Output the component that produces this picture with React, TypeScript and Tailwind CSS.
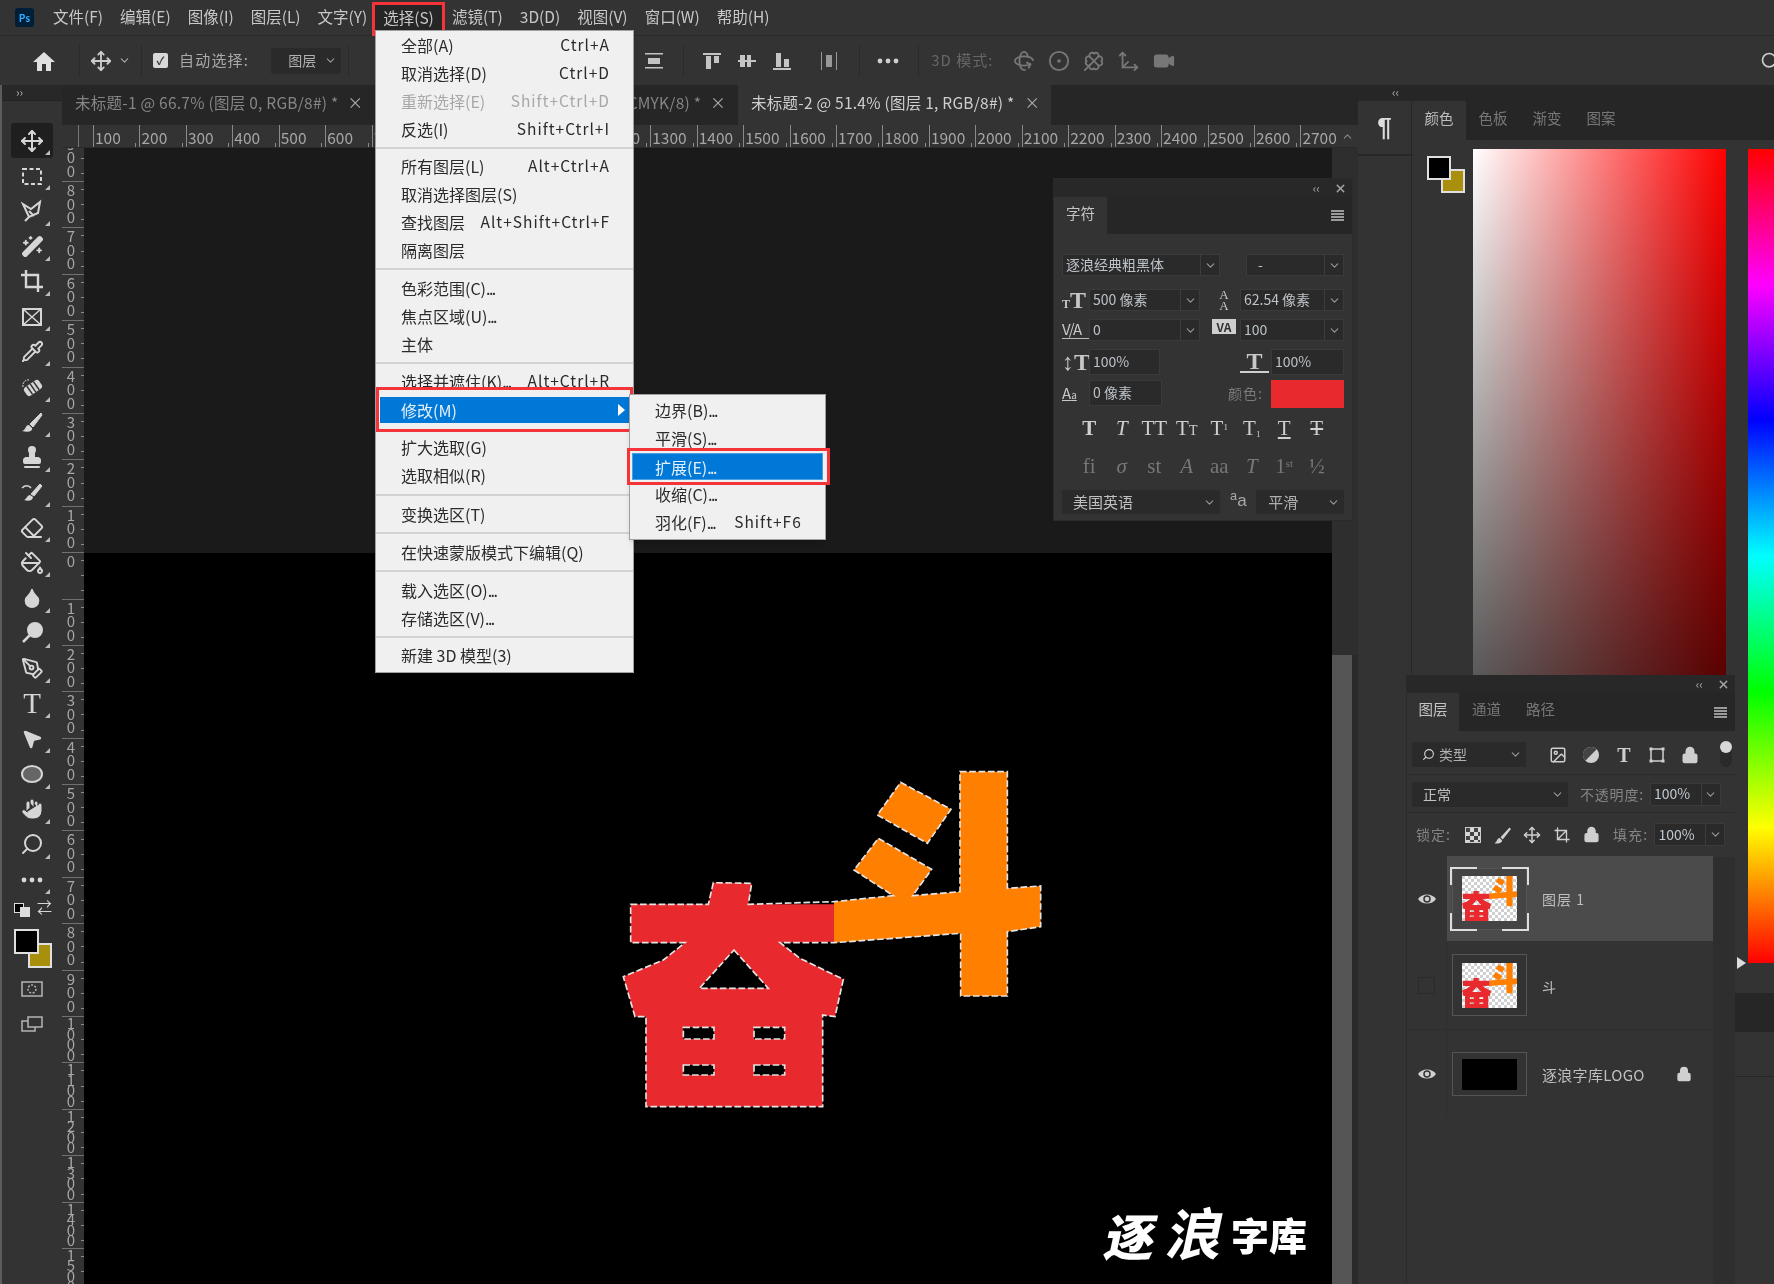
import {
  ChevronDown, ChevronUp, Clover, Crop, Droplet, Eraser, Hand, Lock, Move, Move3d,
  MousePointer2, PaintBucket, PenTool, Pipette, Rotate3d, CircleDot, Search, Stamp, Video, WandSparkles, Image,
  X,
} from "lucide-react";
import type { ReactNode } from "react";

const menuBar = ["文件(F)", "编辑(E)", "图像(I)", "图层(L)", "文字(Y)", "选择(S)", "滤镜(T)", "3D(D)", "视图(V)", "窗口(W)", "帮助(H)"];

type MenuItem = { label?: string; key?: string; dim?: boolean; sep?: string; spacer?: boolean };

const selectMenu: MenuItem[] = [
  { label: "全部(A)", key: "Ctrl+A" },
  { label: "取消选择(D)", key: "Ctrl+D" },
  { label: "重新选择(E)", key: "Shift+Ctrl+D", dim: true },
  { label: "反选(I)", key: "Shift+Ctrl+I" },
  { sep: "h-[9px]" },
  { label: "所有图层(L)", key: "Alt+Ctrl+A" },
  { label: "取消选择图层(S)" },
  { label: "查找图层", key: "Alt+Shift+Ctrl+F" },
  { label: "隔离图层" },
  { sep: "h-[10px]" },
  { label: "色彩范围(C)..." },
  { label: "焦点区域(U)..." },
  { label: "主体" },
  { sep: "h-[9px]" },
  { label: "选择并遮住(K)...", key: "Alt+Ctrl+R" },
  { spacer: true },
  { label: "扩大选取(G)" },
  { label: "选取相似(R)" },
  { sep: "h-[11px]" },
  { label: "变换选区(T)" },
  { sep: "h-[10px]" },
  { label: "在快速蒙版模式下编辑(Q)" },
  { sep: "h-[10px]" },
  { label: "载入选区(O)..." },
  { label: "存储选区(V)..." },
  { sep: "h-[9px]" },
  { label: "新建 3D 模型(3)" },
];

const rulerTop = Array.from({ length: 27 }, (_, i) => (i + 1) * 100);
const rulerLeft = [900, 800, 700, 600, 500, 400, 300, 200, 100, 0, 100, 200, 300, 400, 500, 600, 700, 800, 900, 1000, 1100, 1200, 1300, 1400, 1500];

const redPath = "M92 463H325L340 398L455 400L445 463H702V575L540 578L600 625L730 688L705 800L668 795V1070H138V800H105L70 680L190 630L255 578H92Z";
const holes = "M402 600L505 715H298ZM250 832H342V867H250ZM462 832H554V867H462ZM250 945H342V975H250ZM462 945H554V975H462Z";
const orangePath = "M702 455L880 437L762 360L835 265L995 358L938 437L1080 425V65H1222V415L1322 408V530L1222 545V738H1082V550L702 578Z";
const orangeTop = "M902 97L1053 178L982 280L832 195Z";
const outline = "M92 463H325L340 398L455 400L445 463L702 455L880 437L762 360L835 265L995 358L938 437L1080 425V65H1222V415L1322 408V530L1222 545V738H1082V550L702 578L540 578L600 625L730 688L705 800L668 795V1070H138V800H105L70 680L190 630L255 578H92Z";

function Artwork({ className, viewBox, ants }: { className: string; viewBox: string; ants?: boolean }) {
  return (
    <svg viewBox={viewBox} preserveAspectRatio="none" className={className}>
      <path d={redPath + holes} fill="#e8292d" fillRule="evenodd" />
      <path d={orangePath} fill="#ff8000" />
      <path d={orangeTop} fill="#ff8000" />
      {ants && <path d={outline + holes + orangeTop} fill="none" strokeWidth="5" stroke="#e4e4e4" strokeDasharray="20 8" />}
    </svg>
  );
}

function Svg({ children, size = 24 }: { children: ReactNode; size?: number }) {
  return (
    <svg width={size} height={size} viewBox="0 0 24 24" fill="none" stroke="currentColor" strokeWidth="2">
      {children}
    </svg>
  );
}

function Dots() {
  return (
    <svg width="22" height="6" viewBox="0 0 22 6" fill="currentColor">
      <circle cx="3" cy="3" r="2.4" />
      <circle cx="11" cy="3" r="2.4" />
      <circle cx="19" cy="3" r="2.4" />
    </svg>
  );
}

const tools: { icon: ReactNode; active?: boolean }[] = [
  { icon: <Move size={24} />, active: true },
  { icon: <Svg><rect x="3" y="5" width="18" height="15" strokeDasharray="4 2.5" /></Svg> },
  { icon: <Svg><path d="M3 5L11 10L20 3L18 14L9 18ZM9 18L5 22M9 12L14 17" /></Svg> },
  { icon: <WandSparkles size={23} fill="#d6d6d6" /> },
  { icon: <Svg><path d="M6 1V18H23M1 6H18V23" strokeWidth="2.4" /></Svg> },
  { icon: <Svg><rect x="3" y="4" width="18" height="16" /><path d="M3 4L21 20M21 4L3 20" strokeWidth="1.5" /></Svg> },
  { icon: <Pipette size={23} /> },
  {
    icon: (
      <Svg>
        <g transform="rotate(-35 13 13)">
          <rect x="4" y="8" width="18" height="10" rx="3" fill="currentColor" strokeWidth="0" />
          <path d="M9 8V18M13 8V18M17 8V18" stroke="#333" strokeWidth="1.5" />
        </g>
        <path d="M3 12C2 7 6 4 10 5" strokeWidth="1" strokeDasharray="2 1" />
      </Svg>
    ),
  },
  { icon: <Svg><path d="M21 3L10 14L13 17L22 5Z" fill="currentColor" strokeWidth="1" /><path d="M9 15C5 15 6 20 2 21C8 23 13 21 12 18Z" fill="currentColor" strokeWidth="0" /></Svg> },
  { icon: <Stamp size={24} fill="#d6d6d6" /> },
  { icon: <Svg><path d="M20 4L11 14L14 16L22 6Z" fill="currentColor" strokeWidth="1" /><path d="M10 15C7 15 7 19 4 20C9 22 13 20 13 17Z" fill="currentColor" strokeWidth="0" /><path d="M2 8C5 5 9 5 11 8" strokeWidth="1.5" /></Svg> },
  { icon: <Eraser size={24} /> },
  { icon: <PaintBucket size={24} /> },
  { icon: <Droplet size={22} fill="#d6d6d6" /> },
  { icon: <Svg><circle cx="15" cy="9" r="7" fill="currentColor" /><path d="M10 14L3 21" strokeWidth="2.5" /></Svg> },
  { icon: <PenTool size={23} /> },
  { icon: <span className="font-['Liberation_Serif',serif] text-[29px] leading-none">T</span> },
  { icon: <MousePointer2 size={22} fill="#d6d6d6" /> },
  { icon: <Svg><ellipse cx="12" cy="12" rx="10" ry="8" fill="#666" /></Svg> },
  { icon: <Hand size={24} fill="#d6d6d6" stroke="#333" strokeWidth={1} /> },
  { icon: <Search size={24} className="-scale-y-100 rotate-180" /> },
  { icon: <Dots /> },
];

// the ellipsis after a menu label sits tight in the reference
function Label({ text }: { text: string }) {
  if (!text.endsWith("...")) return <span>{text}</span>;
  return (
    <span>
      {text.slice(0, -3)}
      <span className="tracking-[-1.6px]">...</span>
    </span>
  );
}

function Field({ children, className, arrow }: { children?: ReactNode; className: string; arrow?: boolean }) {
  return (
    <div className={`flex items-center bg-[#2a2a2a] border border-[#3a3a3a] text-[#bcc2c8] text-[14px] ${className}`}>
      <span className="flex-1 pl-[3px] pb-[1px] whitespace-nowrap overflow-hidden">{children}</span>
      {arrow && (
        <span className="w-[19px] h-full flex items-center justify-center border-l border-[#3d3d3d]">
          <ChevronDown size={13} className="text-[#999]" />
        </span>
      )}
    </div>
  );
}

function Select({ children, className }: { children: ReactNode; className: string }) {
  return (
    <div className={`flex items-center justify-between bg-[#2a2a2a] rounded-[2px] text-[#b0b0b0] pr-[4px] ${className}`}>
      {children}
      <ChevronDown size={13} className="text-[#999]" />
    </div>
  );
}

function Grip() {
  return (
    <div className="flex flex-col gap-[1px] w-[13px]">
      <span className="h-[2px] bg-[#9a9a9a]" />
      <span className="h-[2px] bg-[#9a9a9a]" />
      <span className="h-[2px] bg-[#9a9a9a]" />
      <span className="h-[2px] bg-[#9a9a9a]" />
    </div>
  );
}

function PanelHead({ collapse }: { collapse: string }) {
  return (
    <div className="h-[18px] bg-[#282828] flex items-center justify-end text-[#aaa]">
      <span className={`text-[12px] leading-none ${collapse}`}>‹‹</span>
      <X size={13} strokeWidth={2.5} className="mr-[5px]" />
    </div>
  );
}

function Serif({ children, dim, className = "" }: { children: ReactNode; dim?: boolean; className?: string }) {
  return (
    <span className={`w-[32.5px] text-center font-['Liberation_Serif',serif] text-[21px] leading-none whitespace-nowrap ${dim ? "text-[#777]" : "text-[#cfcfcf]"} ${className}`}>
      {children}
    </span>
  );
}

function Eye() {
  return (
    <svg width="18" height="12" viewBox="0 0 24 16">
      <path d="M0 8C5 0 19 0 24 8C19 16 5 16 0 8Z" fill="#d0d0d0" />
      <circle cx="12" cy="8" r="5" fill="#333" />
      <circle cx="12" cy="8" r="3" fill="#d0d0d0" />
    </svg>
  );
}

function CheckerThumb() {
  return (
    <div className="w-[55px] h-[45px] bg-[repeating-conic-gradient(#ffffff_0_25%,#cfcfcf_0_50%)] bg-size-[6px_6px]">
      <Artwork viewBox="70 65 1252 1005" className="w-full h-full" />
    </div>
  );
}

function AlignIcon({ d }: { d: string }) {
  return (
    <svg width="22" height="22" viewBox="0 0 22 22" fill="#c4c4c4">
      <path d={d} />
    </svg>
  );
}

export default function App() {
  return (
    <div className="relative w-[1774px] h-[1284px] overflow-hidden bg-[#333333] flex flex-col font-['Noto_Sans_CJK_SC','Noto_Sans',sans-serif] text-[#c8c8c8] blur-[0.5px]">
      {/* menu bar */}
      <div className="h-[36px] shrink-0 flex items-center border-b border-[#2a2a2a] text-[15.5px] leading-none">
        <div className="ml-[15px] mr-[19px] w-[19px] h-[19px] rounded-[3px] bg-[#001e36] text-[#31a8ff] text-[10px] font-bold flex items-center justify-center">Ps</div>
        <div className="flex gap-[17px] pb-[2px]">
          {menuBar.map((m) => (
            <span key={m} className="whitespace-nowrap">{m}</span>
          ))}
        </div>
      </div>

      {/* options bar */}
      <div className="h-[49px] shrink-0 flex items-center text-[#aaa]">
        <div className="w-[32px]" />
        <svg width="24" height="24" viewBox="0 0 24 24" fill="#e0e0e0"><path d="M12 3L1 13H5V22H10V15H14V22H19V13H23Z" /></svg>
        <span className="w-px h-[32px] bg-[#2a2a2a] ml-[23px]" />
        <Move size={22} className="ml-[10px] text-[#ccc]" />
        <ChevronDown size={13} className="ml-[6px]" />
        <span className="w-px h-[32px] bg-[#2a2a2a] ml-[10px]" />
        <span className="ml-[11px] w-[15px] h-[15px] rounded-[2px] bg-[#d8d8d8] text-[#333] text-[11px] font-bold leading-[15px] text-center">✓</span>
        <span className="ml-[11px] text-[15px] tracking-[1.2px] whitespace-nowrap">自动选择:</span>
        <Select className="ml-[22px] w-[70px] h-[26px] pl-[17px] text-[14px]">图层</Select>
        <span className="w-px h-[32px] bg-[#2a2a2a] ml-[7px]" />
        <div className="ml-[294px] flex items-center">
          <AlignIcon d="M2 3H20V4.5H2ZM5 8H17V14H5ZM2 17H20V18.5H2Z" />
          <span className="w-px h-[32px] bg-[#2a2a2a] ml-[18px]" />
          <div className="ml-[17px] flex gap-[13px] items-center">
            <AlignIcon d="M2 3H20V5H2ZM5 6H10V19H5ZM13 6H18V13H13Z" />
            <AlignIcon d="M4 5H9V10H11V5H15V10H20V12H15V17H11V12H9V17H4V12H2V10H4Z" />
            <AlignIcon d="M2 18H20V20H2ZM5 3H10V17H5ZM13 9H18V17H13Z" />
          </div>
          <div className="ml-[25px] opacity-70"><AlignIcon d="M3 2H4V20H3ZM18 2H19V20H18ZM8 5H14V17H8Z" /></div>
          <span className="w-px h-[32px] bg-[#2a2a2a] ml-[19px]" />
          <span className="ml-[17px] text-[#d0d0d0]"><Dots /></span>
          <span className="w-px h-[32px] bg-[#2a2a2a] ml-[19px]" />
          <span className="ml-[12px] text-[15px] text-[#666] tracking-[1px] whitespace-nowrap">3D 模式:</span>
          <div className="ml-[20px] flex gap-[13px] text-[#777]">
            <Rotate3d size={22} />
            <CircleDot size={22} />
            <Clover size={22} />
            <Move3d size={22} />
            <Video size={22} fill="#777" />
          </div>
        </div>
        <Search size={20} className="ml-auto mr-[-6px] text-[#ccc]" />
      </div>

      <div className="flex-1 min-h-0 flex">
        {/* tool column */}
        <div className="w-[62px] shrink-0 flex flex-col border-l-2 border-[#5c5c5c] bg-[#333333]">
          <div className="h-[16px] bg-[#282828] text-[#aaa] text-[12px] leading-[14px] pl-[14px] border-b border-[#222]">››</div>
          <div className="h-[22px]" />
          <div className="flex flex-col items-center text-[#d6d6d6]">
            {tools.map((t, i) => (
              <div key={i} className={`relative w-[42px] h-[35.2px] flex items-center justify-center ${t.active ? "bg-[#1f1f1f] rounded-[3px]" : ""}`}>
                {t.icon}
                <span className="absolute right-[3px] bottom-[3px] w-0 h-0 border-l-[5px] border-l-transparent border-b-[5px] border-b-[#bdbdbd]" />
              </div>
            ))}
          </div>
          <div className="relative h-[34px] mt-[6px] text-[#d6d6d6]">
            <span className="absolute left-[12px] top-[0px] w-[10px] h-[10px] bg-black border border-[#ddd]" />
            <span className="absolute left-[18px] top-[4px] w-[10px] h-[10px] bg-[#ddd]" />
            <span className="absolute left-[35px] top-[-4px] text-[15px] leading-none">⇄</span>
          </div>
          <div className="relative h-[46px] -mt-[8px]">
            <span className="absolute left-[26px] top-[14px] w-[24px] h-[25px] bg-[#a8900c] border-2 border-[#e0e0e0]" />
            <span className="absolute left-[12px] top-0 w-[25px] h-[25px] bg-black border-2 border-[#e0e0e0]" />
          </div>
          <div className="flex flex-col items-center gap-[11px] mt-[2px] text-[#b5b5b5]">
            <Svg><rect x="2" y="5" width="20" height="14" strokeWidth="1.5" /><circle cx="12" cy="12" r="4" strokeDasharray="2 1.5" strokeWidth="1.5" /></Svg>
            <Svg><rect x="2" y="9" width="13" height="10" strokeWidth="1.5" /><rect x="8" y="5" width="14" height="10" fill="#333" strokeWidth="1.5" /></Svg>
          </div>
        </div>

        {/* document area */}
        <div className="flex-1 min-w-0 flex flex-col">
          <div className="h-[40px] shrink-0 bg-[#262626] flex text-[15.5px] tracking-[0.25px] text-[#858585]">
            <div className="w-[310px] flex items-center pl-[13px] pb-[4px] whitespace-nowrap">
              未标题-1 @ 66.7% (图层 0, RGB/8#) *<span className="ml-[9px] text-[#aaa]">×</span>
            </div>
            <div className="w-[365px] flex items-center justify-end pr-[11px] pb-[4px] whitespace-nowrap">
              未标题-3 @ 100% (CMYK/8) *<span className="ml-[9px] text-[#aaa]">×</span>
            </div>
            <div className="w-[313px] ml-px flex items-center pl-[13px] pb-[4px] bg-[#333333] text-[#cfcfcf] whitespace-nowrap">
              未标题-2 @ 51.4% (图层 1, RGB/8#) *<span className="ml-[10px] text-[#aaa]">×</span>
            </div>
          </div>
          <div className="h-[23px] shrink-0 flex bg-[#333333] border-b border-[#2a2a2a]">
            <div className="w-[31px] shrink-0 flex justify-start pl-[16px]"><span className="w-px h-full bg-[#777]" /></div>
            <div className="flex-1 min-w-0 flex overflow-hidden">
              {rulerTop.map((n) => (
                <div key={n} className="w-[46.45px] shrink-0 flex border-l border-[#8a8a8a] pl-[1px] pt-[2px] text-[15.5px] leading-[20px] text-[#a6a6a6]">
                  {n}
                  <span className="self-end w-px h-[4px] bg-[#8a8a8a] ml-auto mr-[3px]" />
                </div>
              ))}
            </div>
            <div className="w-[22px] shrink-0 flex items-center justify-center"><ChevronUp size={13} className="text-[#888]" /></div>
          </div>
          <div className="flex-1 min-h-0 flex">
            <div className="w-[22px] shrink-0 overflow-hidden bg-[#333333]">
              <div className="-mt-[12.4px]">
                {rulerLeft.map((n, i) => (
                  <div key={i} className="h-[46.4px] flex border-b border-[#707070] pl-[4px]">
                    <div className={`w-[10px] pt-[1px] text-[15px] text-center text-[#a6a6a6] ${n >= 1000 ? "leading-[10.5px]" : "leading-[13.5px]"}`}>
                      {String(n).split("").map((d, j) => (
                        <div key={j}>{d}</div>
                      ))}
                    </div>
                    <div className="ml-auto flex flex-col justify-around w-[3px]">
                      <span className="h-px bg-[#8a8a8a]" />
                      <span className="h-px bg-[#8a8a8a]" />
                      <span className="h-px bg-[#8a8a8a]" />
                    </div>
                  </div>
                ))}
              </div>
            </div>
            <div className="flex-1 min-w-0 flex flex-col">
              <div className="h-[405px] shrink-0 bg-[#1a1a1a]" />
              <div className="relative flex-1 bg-black">
                <Artwork ants viewBox="0 0 1380 1140" className="absolute left-[516px] top-[197px] w-[460px] h-[380px]" />
                <div className="absolute left-[1023px] top-[650px] flex items-end text-white whitespace-nowrap font-black leading-none">
                  <span className="text-[50px] -skew-x-12">逐</span>
                  <span className="ml-[12px] text-[56px] font-bold -skew-x-12">浪</span>
                  <span className="text-[38px] ml-[6px] mb-[6px]">字库</span>
                </div>
              </div>
            </div>
            <div className="w-[26px] shrink-0 flex flex-col">
              <div className="h-[507px] bg-[#2e2e2e]" />
              <div className="flex-1 flex">
                <div className="w-[20px] bg-[#555555]" />
                <div className="flex-1 bg-[#2a2a2a]" />
              </div>
            </div>
          </div>
        </div>

        {/* docked panels */}
        <div className="w-[416px] shrink-0 flex flex-col">
          <div className="h-[16px] shrink-0 bg-[#262626] text-[#aaa] text-[12px] leading-[14px] pl-[34px]">‹‹</div>
          <div className="flex-1 min-h-0 flex">
            <div className="w-[54px] shrink-0 border-r border-[#262626]">
              <div className="h-[55px] flex items-center justify-center border-b-2 border-[#262626] text-[#ddd] font-['Liberation_Sans',sans-serif] text-[26px] font-bold">¶</div>
            </div>
            <div className="flex-1 min-w-0 flex flex-col">
              <div className="h-[39px] shrink-0 flex bg-[#262626] text-[14.5px] text-[#777]">
                <span className="w-[54px] bg-[#333333] text-[#bdbdbd] leading-[33px] text-center">颜色</span>
                <span className="w-[54px] leading-[33px] text-center">色板</span>
                <span className="w-[54px] leading-[33px] text-center">渐变</span>
                <span className="w-[54px] leading-[33px] text-center">图案</span>
              </div>
              <div className="h-[823px] shrink-0 flex pt-[9px]">
                <div className="relative w-[61px] shrink-0">
                  <span className="absolute left-[29px] top-[20px] w-[24px] h-[24px] bg-[#a8900c] border-2 border-[#e0e0e0]" />
                  <span className="absolute left-[15px] top-[7px] w-[24px] h-[24px] bg-black border-2 border-[#e0e0e0]" />
                </div>
                <div className="w-[253px] h-[814px] bg-[linear-gradient(to_bottom,transparent,#000),linear-gradient(to_right,#fff,#f00)]" />
                <div className="relative ml-[22px] flex-1 h-[814px] bg-[linear-gradient(to_bottom,#f00,#f0f_16.7%,#00f_33.3%,#0ff_50%,#0f0_66.7%,#ff0_83.3%,#f00)]">
                  <span className="absolute -left-[11px] bottom-[-6px] w-0 h-0 border-y-[6px] border-y-transparent border-l-[9px] border-l-[#ddd]" />
                </div>
              </div>
              <div className="h-[30px] shrink-0" />
              <div className="h-[39px] shrink-0 bg-[#262626]" />
              <div className="h-[45px] shrink-0 border-b border-[#262626]" />
            </div>
          </div>
        </div>
      </div>

      {/* select menu */}
      <div className="absolute left-[372px] top-[2px] w-[73px] h-[34px] border-[3px] border-[#f5343a] flex items-center justify-center text-[15.5px] leading-none">
        <span className="bg-[#262626] w-full h-full pb-[2px] flex items-center justify-center whitespace-nowrap">选择(S)</span>
      </div>
      <div className="absolute left-[375px] top-[30px] w-[259px] pb-[3px] bg-[#f0f0f0] border border-[#a0a0a0] text-[16px] leading-none text-[#2b2b2b] shadow-md">
        {selectMenu.map((it, i) =>
          it.sep ? (
            <div key={i} className={`flex items-center ${it.sep}`}><span className="w-full h-[2px] bg-[#d2d2d2]" /></div>
          ) : it.spacer ? (
            <div key={i} className="h-[38px]" />
          ) : (
            <div key={i} className={`h-[28px] flex items-center justify-between pl-[25px] pr-[23px] whitespace-nowrap ${it.dim ? "text-[#a8a8a8]" : ""}`}>
              <Label text={it.label ?? ""} />
              {it.key && <span className="text-[15.5px] tracking-[1px]">{it.key}</span>}
            </div>
          ),
        )}
        <div className="absolute left-0 top-[356px] w-[257px] h-[45px] border-[3px] border-[#f5343a] bg-[#f0f0f0] pt-[7px] pl-[1px] pr-[1px]">
          <div className="h-[26px] bg-[#0078d7] text-[#e6f0fa] flex items-center justify-between pl-[21px] pr-[4px]">
            修改(M)
            <span className="w-0 h-0 border-y-[6px] border-y-transparent border-l-[7px] border-l-white" />
          </div>
        </div>
      </div>

      {/* modify submenu */}
      <div className="absolute left-[629px] top-[394px] w-[197px] h-[146px] pt-[1px] bg-[#f0f0f0] border border-[#a0a0a0] text-[16px] leading-none text-[#2b2b2b] shadow-md">
        <div className="h-[28px] flex items-center pl-[25px]"><Label text="边界(B)..." /></div>
        <div className="h-[28px] flex items-center pl-[25px]"><Label text="平滑(S)..." /></div>
        <div className="h-[28px]" />
        <div className="h-[28px] flex items-center pl-[25px]"><Label text="收缩(C)..." /></div>
        <div className="h-[28px] flex items-center pl-[25px] whitespace-nowrap">
          <Label text="羽化(F)..." /><span className="ml-[19px] text-[15.5px] tracking-[1px]">Shift+F6</span>
        </div>
      </div>
      <div className="absolute left-[627px] top-[448px] w-[203px] h-[37px] border-[3px] border-[#f5343a] bg-[#f0f0f0] pl-[2px] pr-[4px] py-[2px]">
        <div className="h-full bg-[#0078d7] border border-[#4a9fe0] text-[#e6f0fa] text-[16px] leading-none flex items-center pl-[22px]"><Label text="扩展(E)..." /></div>
      </div>

      {/* character panel */}
      <div className="absolute left-[1054px] top-[179px] w-[298px] h-[341px] bg-[#333333] shadow-[0_0_0_1px_#2a2a2a]">
        <PanelHead collapse="mr-[14px]" />
        <div className="h-[37px] flex bg-[#262626] text-[14.5px] items-center">
          <span className="w-[53px] h-full bg-[#333333] text-[#c4c4c4] leading-[32px] text-center">字符</span>
          <div className="ml-auto mr-[8px]"><Grip /></div>
        </div>
        <div className="px-[8px]">
          <div className="mt-[20px] h-[22px] flex justify-between">
            <Field arrow className="w-[158px]">逐浪经典粗黑体</Field>
            <Field arrow className="w-[98px] text-[#888]"><span className="pl-[8px]">-</span></Field>
          </div>
          <div className="mt-[13px] h-[22px] flex">
            <span className="w-[27px] font-['Liberation_Serif',serif] text-[24px] leading-[22px] font-bold whitespace-nowrap"><span className="text-[12px]">T</span>T</span>
            <Field arrow className="w-[111px]">500 像素</Field>
            <span className="w-[24px] ml-auto font-['Liberation_Serif',serif] text-[13px] leading-[11px] text-center">A<br />A</span>
            <Field arrow className="w-[104px] ml-[4px]">62.54 像素</Field>
          </div>
          <div className="mt-[8px] h-[22px] flex">
            <span className="w-[27px] text-[15px] leading-[20px] tracking-[-1px] border-b border-[#bbb] h-[20px]">V/A</span>
            <Field arrow className="w-[111px]">0</Field>
            <span className="w-[24px] ml-auto h-[15px] bg-[#cfcfcf] text-[#333] text-[12px] font-bold leading-[15px] text-center">VA</span>
            <Field arrow className="w-[104px] ml-[4px]">100</Field>
          </div>
          <div className="mt-[8px] h-[26px] flex">
            <span className="w-[27px] font-['Liberation_Serif',serif] text-[24px] leading-[26px] font-bold whitespace-nowrap">↕T</span>
            <Field className="w-[71px]">100%</Field>
            <span className="ml-auto w-[29px] font-['Liberation_Serif',serif] text-[24px] leading-[24px] font-bold text-center border-b-2 border-[#cfcfcf] h-[24px]">T</span>
            <Field className="w-[73px] ml-[2px]">100%</Field>
          </div>
          <div className="mt-[5px] h-[28px] flex">
            <span className="w-[27px] text-[15px] leading-[26px] whitespace-nowrap underline">A<span className="text-[10px]">a</span></span>
            <Field className="w-[73px] h-[26px]">0 像素</Field>
            <span className="ml-auto text-[14px] text-[#7a7a7a] tracking-[1px] leading-[26px] whitespace-nowrap">颜色:</span>
            <span className="ml-[8px] w-[73px] bg-[#e8292d]" />
          </div>
          <div className="mt-[6px] h-[28px] flex items-center pl-[11px] -mr-[8px]">
            <Serif className="font-bold">T</Serif>
            <Serif className="italic">T</Serif>
            <Serif>TT</Serif>
            <Serif>T<span className="text-[14px]">T</span></Serif>
            <Serif>T<sup className="text-[9px]">1</sup></Serif>
            <Serif>T<sub className="text-[9px]">1</sub></Serif>
            <Serif className="underline">T</Serif>
            <Serif className="line-through">T</Serif>
          </div>
          <div className="mt-[10px] h-[28px] flex items-center pl-[11px] -mr-[8px]">
            <Serif dim>fi</Serif>
            <Serif dim className="italic">σ</Serif>
            <Serif dim>st</Serif>
            <Serif dim className="italic">A</Serif>
            <Serif dim>aa</Serif>
            <Serif dim className="italic">T</Serif>
            <Serif dim>1<sup className="text-[11px]">st</sup></Serif>
            <Serif dim>½</Serif>
          </div>
          <div className="mt-[10px] h-[24px] flex">
            <Select className="w-[159px] pl-[11px] text-[#c0c0c0] text-[15px]">美国英语</Select>
            <span className="w-[36px] text-center font-['Liberation_Sans',sans-serif] text-[17px] leading-[22px] text-[#aaa]"><sup>a</sup>a</span>
            <Select className="w-[88px] pl-[12px] text-[15px]">平滑</Select>
          </div>
        </div>
      </div>

      {/* layers panel */}
      <div className="absolute left-[1406px] top-[675px] bottom-0 w-[329px] bg-[#333333] border-l border-[#2a2a2a]">
        <PanelHead collapse="mr-[14px]" />
        <div className="h-[38px] flex bg-[#262626] text-[14.5px] text-[#777] items-center">
          <span className="w-[52px] h-full bg-[#333333] text-[#c4c4c4] leading-[32px] text-center">图层</span>
          <span className="w-[55px] h-full leading-[32px] text-center">通道</span>
          <span className="w-[53px] h-full leading-[32px] text-center">路径</span>
          <div className="ml-auto mr-[8px]"><Grip /></div>
        </div>
        <div className="h-[44px] flex items-center pl-[5px] pt-[4px] border-b border-[#2a2a2a]">
          <Select className="w-[114px] h-[25px] text-[14px]">
            <span className="flex items-center gap-[4px] pl-[10px]"><Search size={13} className="-scale-x-100 text-[#ddd]" />类型</span>
          </Select>
          <div className="ml-[23px] flex items-center gap-[15px] text-[#cfcfcf]">
            <Image size={18} />
            <svg width="18" height="18" viewBox="0 0 18 18"><circle cx="9" cy="9" r="8" fill="#cfcfcf" /><path d="M3.3 14.7A8 8 0 0 1 14.7 3.3Z" fill="#444" /></svg>
            <span className="w-[18px] text-center font-['Liberation_Serif',serif] text-[20px] leading-none font-bold">T</span>
            <Svg size={18}><rect x="4" y="4" width="16" height="16" /><rect x="2" y="2" width="4" height="4" fill="#cfcfcf" strokeWidth="0" /><rect x="18" y="2" width="4" height="4" fill="#cfcfcf" strokeWidth="0" /><rect x="2" y="18" width="4" height="4" fill="#cfcfcf" strokeWidth="0" /><rect x="18" y="18" width="4" height="4" fill="#cfcfcf" strokeWidth="0" /></Svg>
            <Lock size={18} fill="#cfcfcf" />
          </div>
          <div className="relative ml-[21px] w-[12px] h-[25px] rounded-full bg-[#2a2a2a]">
            <span className="absolute -top-[1px] left-0 w-[12px] h-[12px] rounded-full bg-[#d8d8d8]" />
          </div>
        </div>
        <div className="h-[38px] flex items-center pl-[5px] pt-[1px] border-b border-[#2a2a2a] text-[14px]">
          <Select className="w-[156px] h-[25px] pl-[11px] text-[#c0c0c0]">正常</Select>
          <span className="ml-[12px] text-[#858585] tracking-[0.8px] whitespace-nowrap">不透明度:</span>
          <Field arrow className="ml-[6px] w-[71px] h-[23px] !text-[#c0c8d0]">100%</Field>
        </div>
        <div className="h-[43px] flex items-center pl-[9px] text-[14px]">
          <span className="text-[#858585] tracking-[1px] whitespace-nowrap">锁定:</span>
          <div className="ml-[14px] flex items-center gap-[12px] text-[#cfcfcf]">
            <span className="w-[16px] h-[16px] bg-[repeating-conic-gradient(#d8d8d8_0_25%,#444_0_50%)] bg-size-[8px_8px] border border-[#ccc]" />
            <svg width="18" height="18" viewBox="0 0 24 24" fill="currentColor"><path d="M22 2L10 15L13 18L24 4ZM9 16C5 16 6 21 2 23C8 24 13 22 12 19Z" /></svg>
            <Move size={18} />
            <Svg size={18}><path d="M6 2V18H22M2 6H18V22M6 18L18 6" strokeWidth="1.8" /></Svg>
            <Lock size={17} fill="#cfcfcf" />
          </div>
          <span className="ml-[13px] text-[#858585] tracking-[1.2px] whitespace-nowrap">填充:</span>
          <Field arrow className="ml-[6px] w-[71px] h-[23px] !text-[#c0c8d0]">100%</Field>
        </div>

        <div className="flex flex-col w-[306px]">
          <div className="h-[85px] flex">
            <div className="w-[40px] flex items-center justify-center"><Eye /></div>
            <div className="flex-1 bg-[#4b4b4b] flex items-center text-[14px] text-[#bfbfbf]">
              <div className="relative ml-[5px] w-[75px] h-[62px] bg-[#444] flex items-center justify-center border border-[#555]">
                <CheckerThumb />
                <span className="absolute -left-[3px] -top-[2px] w-[27px] h-[18px] border-l-2 border-t-2 border-[#ddd]" />
                <span className="absolute -right-[3px] -top-[2px] w-[27px] h-[18px] border-r-2 border-t-2 border-[#ddd]" />
                <span className="absolute -left-[3px] -bottom-[2px] w-[27px] h-[18px] border-l-2 border-b-2 border-[#ddd]" />
                <span className="absolute -right-[3px] -bottom-[2px] w-[27px] h-[18px] border-r-2 border-b-2 border-[#ddd]" />
              </div>
              <span className="ml-[15px] pt-[2px] tracking-[1px]">图层 1</span>
            </div>
          </div>
          <div className="h-[89px] flex border-b border-[#2e2e2e]">
            <div className="w-[40px] flex items-center justify-center border-r border-[#2e2e2e]"><span className="w-[17px] h-[17px] border border-[#2a2a2a]" /></div>
            <div className="flex-1 flex items-center text-[14px] text-[#bfbfbf]">
              <div className="ml-[5px] w-[75px] h-[62px] flex items-center justify-center border border-[#555]"><CheckerThumb /></div>
              <span className="ml-[15px] pt-[2px]">斗</span>
            </div>
          </div>
          <div className="h-[88px] flex">
            <div className="w-[40px] flex items-center justify-center border-r border-[#2e2e2e]"><Eye /></div>
            <div className="flex-1 flex items-center text-[15px] text-[#bfbfbf] relative">
              <div className="ml-[5px] w-[75px] h-[44px] flex items-center justify-center border border-[#555]"><span className="w-[55px] h-[31px] bg-black" /></div>
              <span className="ml-[15px] pt-[2px] whitespace-nowrap tracking-[0.3px]">逐浪字库LOGO</span>
              <Lock size={16} fill="#d0d0d0" className="ml-[31px] text-[#d0d0d0]" />
            </div>
          </div>
        </div>
        <div className="absolute right-0 top-[182px] bottom-0 w-[22px] bg-[#2e2e2e]" />
      </div>
    </div>
  );
}
